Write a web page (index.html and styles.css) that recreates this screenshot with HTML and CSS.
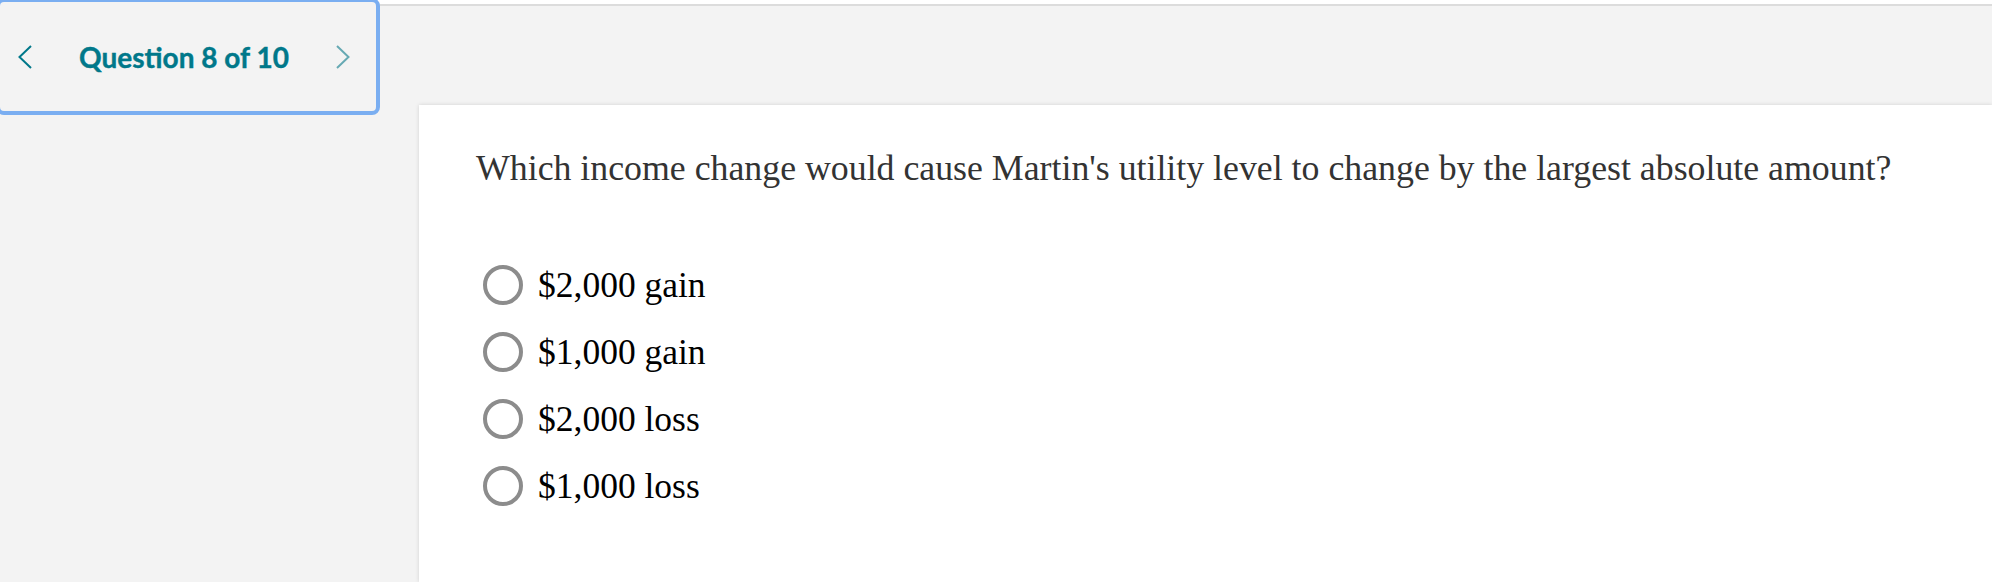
FILE: index.html
```html
<!DOCTYPE html>
<html lang="en">
<head>
<meta charset="utf-8">
<title>Question 8 of 10</title>
<link rel="stylesheet" href="styles.css">
</head>
<body>
<div class="page">
  <nav class="qnav">
    <span class="chev">
      <svg width="14" height="24" viewBox="0 0 14 24"><polyline points="13,1 1.5,12 13,23" fill="none" stroke="currentColor" stroke-width="2"/></svg>
    </span>
    <span class="qnav-title">Question 8 of 10</span>
    <span class="chev chev-next">
      <svg width="14" height="24" viewBox="0 0 14 24"><polyline points="1,1 12.5,12 1,23" fill="none" stroke="currentColor" stroke-width="2"/></svg>
    </span>
  </nav>
  <div class="topfill"></div>
  <main class="card">
    <p class="question">Which income change would cause Martin's utility level to change by the largest absolute amount?</p>
    <div class="options">
      <label class="option"><span class="radio"></span><span class="opt-text">$2,000 gain</span></label>
      <label class="option"><span class="radio"></span><span class="opt-text">$1,000 gain</span></label>
      <label class="option"><span class="radio"></span><span class="opt-text">$2,000 loss</span></label>
      <label class="option"><span class="radio"></span><span class="opt-text">$1,000 loss</span></label>
    </div>
  </main>
</div>
</body>
</html>
```

FILE: styles.css
```css
html, body {
  margin: 0;
  padding: 0;
  background: #f3f3f3;
}

.page {
  display: grid;
  grid-template-columns: 376px 43px 1fr;
  grid-template-rows: 105px 1fr;
  min-height: 100vh;
}

.qnav {
  grid-column: 1;
  grid-row: 1;
  align-self: start;
  margin-top: 2px;
  height: 109px;
  box-sizing: border-box;
  display: flex;
  align-items: center;
  justify-content: space-between;
  padding: 0 26px 0 18px;
  background: #f3f3f3;
  outline: 4px solid #7aaef1;
  border-radius: 4px;
  color: #00788a;
  font-family: Lato, "Open Sans", sans-serif;
  position: relative;
  z-index: 2;
}

.chev {
  display: flex;
  width: 14px;
  height: 24px;
}

.chev-next {
  color: #66a9b3;
}

.qnav-title {
  font-weight: 700;
  font-size: 28px;
  line-height: 1;
  padding-top: 1px;
  -webkit-text-stroke: 0.4px currentColor;
}

.topfill {
  grid-column: 2 / 4;
  grid-row: 1;
  background: #f3f3f3;
  box-shadow: inset 0 4px 0 #ffffff, inset 0 6px 0 #dcdcdc;
}

.card {
  grid-column: 3;
  grid-row: 2;
  background: #ffffff;
  box-shadow: 0 0 4px rgba(0, 0, 0, 0.14);
  padding: 42px 0 0 57px;
  font-family: "Liberation Serif", "Times New Roman", serif;
}

.question {
  margin: 0 0 62px 0;
  font-size: 35.8px;
  color: #333333;
}

.options {
  display: flex;
  flex-direction: column;
  padding-left: 7px;
}

.option {
  display: flex;
  align-items: center;
  gap: 15px;
  height: 67px;
  color: #000000;
  font-size: 35.5px;
}

.radio {
  width: 40px;
  height: 40px;
  box-sizing: border-box;
  border: 4px solid #8c8c8c;
  border-radius: 50%;
  flex: none;
  background: #fff;
}
```
